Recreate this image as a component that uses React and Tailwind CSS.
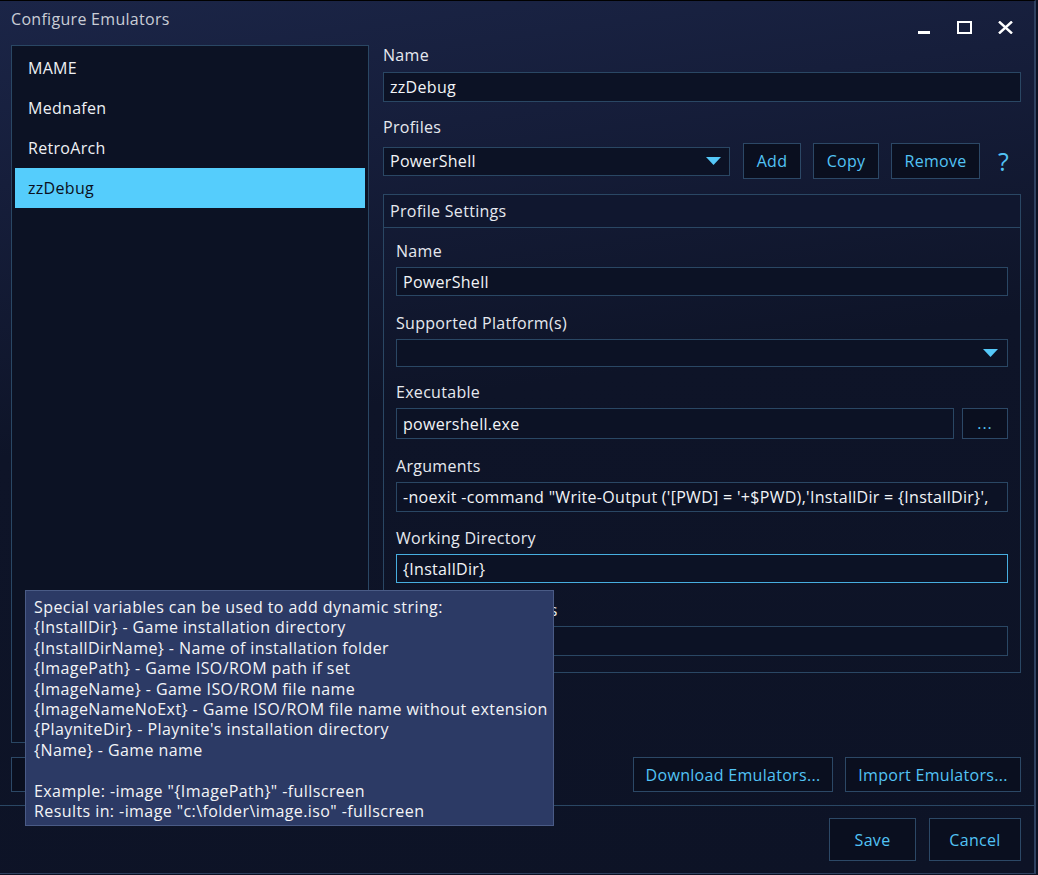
const FONT = "font-['Open_Sans','Noto_Sans',sans-serif]";

function Caret() {
  return (
    <svg width="15" height="8" viewBox="0 0 15 8" className="shrink-0">
      <path d="M0 0 H15 L7.5 8 Z" fill="#55c8f8" />
    </svg>
  );
}

function Label({ children, className = "" }) {
  return <div className={`h-[20px] leading-[20px] text-[#e6e9ef] ${className}`}>{children}</div>;
}

function Input({ children, className = "", focused = false }) {
  return (
    <div
      className={`flex items-center px-[6px] border ${focused ? "border-[#47aee0]" : "border-[#2a4764]"} bg-[#0c1225] text-[#f2f4f7] whitespace-nowrap overflow-hidden ${className}`}
    >
      {children}
    </div>
  );
}

function Btn({ children, className = "" }) {
  return (
    <div className={`flex items-center justify-center border border-[#2c4866] bg-[#0a0f1f] text-[#52c3f5] whitespace-nowrap ${className}`}>
      {children}
    </div>
  );
}

export default function App() {
  const tip = [
    "Special variables can be used to add dynamic string:",
    "{InstallDir} - Game installation directory",
    "{InstallDirName} - Name of installation folder",
    "{ImagePath} - Game ISO/ROM path if set",
    "{ImageName} - Game ISO/ROM file name",
    "{ImageNameNoExt} - Game ISO/ROM file name without extension",
    "{PlayniteDir} - Playnite's installation directory",
    "{Name} - Game name",
    "\u00a0",
    'Example: -image "{ImagePath}" -fullscreen',
    'Results in: -image "c:\\folder\\image.iso" -fullscreen',
  ];
  return (
    <div className={`w-[1038px] h-[875px] bg-[#0c1122] overflow-hidden ${FONT} text-[16px] tracking-[0.3px]`}>
      <div className="relative w-[1036px] h-[874px] border-t border-black border-r-2 border-r-[#2f4160] border-b border-b-[#2f4160] bg-[linear-gradient(172deg,#1b2547_0%,#161e3b_18%,#0e1428_45%,#0d1326_100%)] flex flex-col">
        {/* title bar */}
        <div className="h-[39px] flex items-center pl-[11px] pr-[8px] shrink-0">
          <div className="text-[16px] text-[#c9cdd6] -mt-[3px]">Configure Emulators</div>
          <div className="ml-auto flex items-end h-[26px] pb-0 mt-[1px]">
            <div className="w-[41px] flex justify-center">
              <div className="w-[12px] h-[3px] bg-white" />
            </div>
            <div className="w-[41px] flex justify-center">
              <div className="w-[15px] h-[13px] border-2 border-white" />
            </div>
            <div className="w-[41px] flex justify-center">
              <svg width="15" height="13" viewBox="0 0 15 13">
                <path d="M1 0.5 L14 12.5 M14 0.5 L1 12.5" stroke="white" strokeWidth="2.4" />
              </svg>
            </div>
          </div>
        </div>

        {/* body */}
        <div className="flex-1 flex flex-col pt-[5px] pl-[11px]">
          <div className="flex h-[698px] gap-[14px]">
            {/* list */}
            <div className="w-[358px] border border-[#2a4764] bg-[#0c1224] p-[3px] pt-[2px]">
              {["MAME", "Mednafen", "RetroArch"].map((n) => (
                <div key={n} className="h-[40px] flex items-center pl-[13px] text-[#eef0f4] font-medium">
                  {n}
                </div>
              ))}
              <div className="h-[40px] flex items-center pl-[13px] bg-[#55cdfc] text-[#0b1020] font-medium">zzDebug</div>
            </div>

            {/* right */}
            <div className="w-[638px] flex flex-col">
              <Label>Name</Label>
              <Input className="mt-[7px] h-[30px]">zzDebug</Input>
              <Label className="mt-[15px]">Profiles</Label>
              <div className="mt-[6px] h-[36px] flex items-center">
                <Input className="w-[347px] h-[29px] justify-between pr-[8px]">
                  <span>PowerShell</span>
                  <Caret />
                </Input>
                <Btn className="ml-[13px] w-[58px] h-[36px]">Add</Btn>
                <Btn className="ml-[12px] w-[66px] h-[36px]">Copy</Btn>
                <Btn className="ml-[12px] w-[89px] h-[36px]">Remove</Btn>
                <div className="ml-[18px] text-[25px] leading-none text-[#52c3f5]">?</div>
              </div>

              {/* profile settings group */}
              <div className="mt-[15px] border border-[#2a4764] flex flex-col pb-[16px]">
                <div className="h-[33px] border-b border-[#2a4764] bg-[#10172f] flex items-center pl-[6px] text-[#e6e9ef]">
                  Profile Settings
                </div>
                <div className="px-[12px] pt-[13px] flex flex-col">
                  <Label>Name</Label>
                  <Input className="mt-[6px] h-[29px]">PowerShell</Input>
                  <Label className="mt-[17px]">Supported Platform(s)</Label>
                  <Input className="mt-[6px] h-[28px] justify-end pr-[9px]">
                    <Caret />
                  </Input>
                  <Label className="mt-[15px]">Executable</Label>
                  <div className="mt-[6px] h-[31px] flex gap-[8px]">
                    <Input className="flex-1 h-[31px]">powershell.exe</Input>
                    <Btn className="w-[46px] h-[31px] text-[16px] leading-none pb-[2px]">
                      <span className="tracking-[1px]">...</span>
                    </Btn>
                  </div>
                  <Label className="mt-[17px]">Arguments</Label>
                  <Input className="mt-[6px] h-[30px]">
                    <span>-noexit -command "Write-Output ('[PWD] = '+$PWD),'InstallDir = {"{InstallDir}"}',</span>
                  </Input>
                  <Label className="mt-[16px]">Working Directory</Label>
                  <Input focused className="mt-[6px] h-[29px]">{"{InstallDir}"}</Input>
                  <Label className="mt-[17px]">Supported File Types</Label>
                  <Input className="mt-[6px] h-[30px]"></Input>
                </div>
              </div>
            </div>
          </div>

          {/* bottom buttons row */}
          <div className="mt-[14px] h-[35px] flex">
            <div className="w-[358px] flex gap-[10px]">
              <Btn className="w-[64px] h-[35px]"></Btn>
              <Btn className="w-[84px] h-[35px]"></Btn>
            </div>
            <div className="w-[652px] flex justify-end gap-[12px]">
              <Btn className="w-[200px] h-[35px]">Download Emulators...</Btn>
              <Btn className="w-[176px] h-[35px]">Import Emulators...</Btn>
            </div>
          </div>
        </div>

        {/* footer */}
        <div className="h-[68px] mt-[13px] border-t border-[#2a4764] flex justify-end items-start pt-[12px] pr-[13px] gap-[13px] shrink-0">
          <Btn className="w-[87px] h-[43px]">Save</Btn>
          <Btn className="w-[92px] h-[43px]">Cancel</Btn>
        </div>

        {/* tooltip */}
        <div className="absolute left-[25px] top-[589px] w-[529px] h-[236px] bg-[#2c3a65] border border-[#4a5b86] pl-[8px] pt-[6px] text-[#f3f4f7] leading-[20.4px] tracking-[0.42px] whitespace-nowrap">
          {tip.map((l, i) => (
            <div key={i}>{l}</div>
          ))}
        </div>
      </div>
    </div>
  );
}
